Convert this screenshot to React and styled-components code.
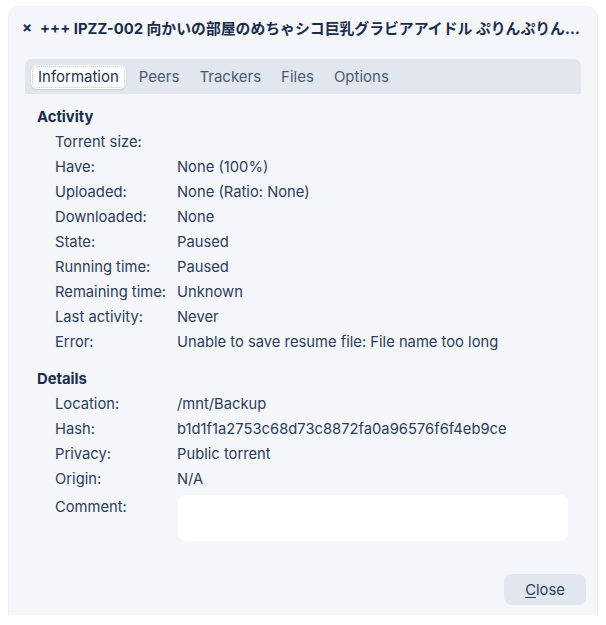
import React from 'react'
import styled, { createGlobalStyle } from 'styled-components'

const GlobalStyle = createGlobalStyle`
  body {
    margin: 0;
    background: #ffffff;
    font-family: Inter, "Noto Sans CJK JP", sans-serif;
    color: #2b3d5b;
  }
`

const Window = styled.div`
  margin: 7px 0 0 9px;
  width: 588px;
  height: 608px;
  background: #f5f6fa;
  border-radius: 11px 11px 0 0;
  box-shadow: 0 0 0 1px rgba(40, 50, 70, 0.08);
  display: flex;
  flex-direction: column;
  box-sizing: border-box;
`

const TitleBar = styled.div`
  height: 40px;
  display: flex;
  align-items: center;
  gap: 8px;
  padding: 0 14px 0 13px;
  font-size: 14.85px;
  font-weight: 700;
  color: #1a2d4c;
  white-space: nowrap;
  overflow: hidden;
`

const CloseMark = styled.span`
  font-size: 15px;
  font-weight: 700;
  width: 10px;
`

const Body = styled.div`
  flex: 1;
  display: flex;
  flex-direction: column;
  padding: 12px 16px 10px;
`

const TabBar = styled.div`
  display: flex;
  align-items: center;
  gap: 6px;
  height: 35px;
  padding: 0 6px;
  background: #e2e6ee;
  border-radius: 7px 7px 0 0;
`

const Tab = styled.div`
  height: 24px;
  display: flex;
  align-items: center;
  padding: 0 7px;
  font-size: 15px;
  border-radius: 6px;
  color: ${(p) => (p.$active ? '#1f3050' : '#4a5a74')};
  background: ${(p) => (p.$active ? '#ffffff' : 'transparent')};
  box-shadow: ${(p) => (p.$active ? '0 1px 2px rgba(0,0,0,0.12)' : 'none')};
  position: relative;

  &::after {
    content: '';
    display: ${(p) => (p.$active ? 'block' : 'none')};
    position: absolute;
    inset: 1px;
    border: 1px dotted #c2c7d1;
    border-radius: 5px;
  }
`

const Section = styled.div`
  padding: 0 0 0 12px;
  margin-top: ${(p) => p.$top}px;
`

const Heading = styled.div`
  font-size: 14.8px;
  font-weight: 700;
  color: #1a2d4c;
  height: 25px;
  line-height: 25px;
`

const Row = styled.div`
  display: grid;
  grid-template-columns: 122px 1fr;
  padding-left: 18px;
  font-size: 14.75px;
  line-height: 25px;
  padding-right: 13px;
`

const Label = styled.div`
  padding-top: ${(p) => (p.$top ? '3px' : '0')};
`

const CommentBox = styled.div`
  height: 46px;
  margin-top: 3px;
  background: #ffffff;
  border-radius: 8px;
  margin-left: 1px;
`

const Footer = styled.div`
  margin-top: auto;
  display: flex;
  justify-content: flex-end;
`

const Button = styled.button`
  width: 82px;
  height: 31px;
  border: none;
  border-radius: 8px;
  background: #e2e6ee;
  color: #2b3d5b;
  font-family: inherit;
  font-size: 14.8px;
  margin-right: -5px;
  u {
    text-decoration-thickness: 1px;
    text-underline-offset: 2px;
  }
`

const activity = [
  ['Torrent size:', ''],
  ['Have:', 'None (100%)'],
  ['Uploaded:', 'None (Ratio: None)'],
  ['Downloaded:', 'None'],
  ['State:', 'Paused'],
  ['Running time:', 'Paused'],
  ['Remaining time:', 'Unknown'],
  ['Last activity:', 'Never'],
  ['Error:', 'Unable to save resume file: File name too long'],
]

const details = [
  ['Location:', '/mnt/Backup'],
  ['Hash:', 'b1d1f1a2753c68d73c8872fa0a96576f6f4eb9ce'],
  ['Privacy:', 'Public torrent'],
  ['Origin:', 'N/A'],
]

const tabs = ['Information', 'Peers', 'Trackers', 'Files', 'Options']

export default function App() {
  return (
    <>
      <GlobalStyle />
      <Window>
        <TitleBar>
          <CloseMark>×</CloseMark>
          <span>+++ IPZZ-002 向かいの部屋のめちゃシコ巨乳グラビアアイドル ぷりんぷりん…</span>
        </TitleBar>
        <Body>
          <TabBar>
            {tabs.map((t, i) => (
              <Tab key={t} $active={i === 0}>
                {t}
              </Tab>
            ))}
          </TabBar>
          <Section $top={11}>
            <Heading>Activity</Heading>
            {activity.map(([k, v]) => (
              <Row key={k}>
                <Label>{k}</Label>
                <div>{v}</div>
              </Row>
            ))}
          </Section>
          <Section $top={12}>
            <Heading>Details</Heading>
            {details.map(([k, v]) => (
              <Row key={k}>
                <Label>{k}</Label>
                <div>{v}</div>
              </Row>
            ))}
            <Row>
              <Label $top>Comment:</Label>
              <CommentBox />
            </Row>
          </Section>
          <Footer>
            <Button>
              <u>C</u>lose
            </Button>
          </Footer>
        </Body>
      </Window>
    </>
  )
}
